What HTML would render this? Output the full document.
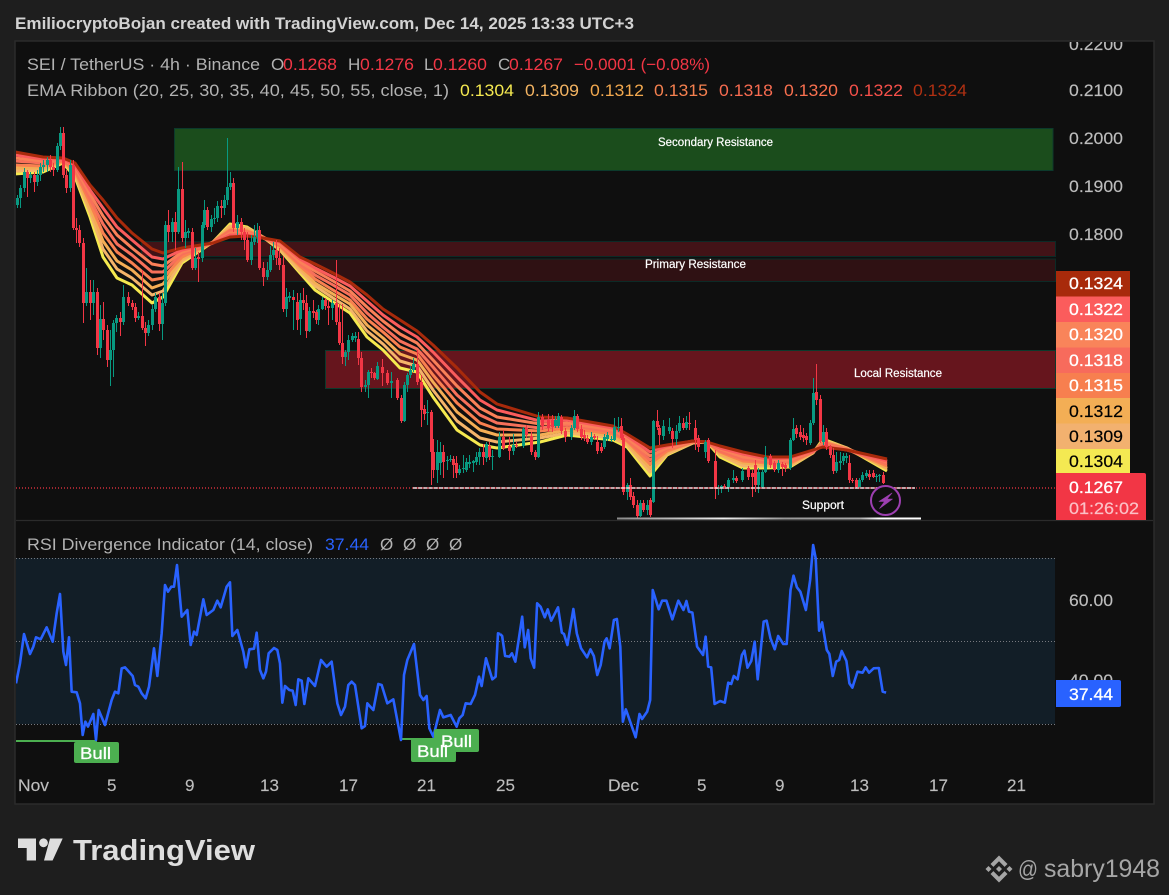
<!DOCTYPE html>
<html lang="en">
<head>
<meta charset="utf-8">
<title>SEI / TetherUS</title>
<style>
html,body{margin:0;padding:0;background:#1e1e1e;width:1169px;height:895px;overflow:hidden}
svg{display:block}
text{font-family:"Liberation Sans",sans-serif;font-size:17px;fill:#b2b2b2}
.ax{fill:#bdbdbd;stroke:#bdbdbd;stroke-width:.15}
.w{fill:#fff;stroke:#fff;stroke-width:.3}
.k{fill:#000;stroke:#000;stroke-width:.2}
.r{fill:#f23645}
.z{font-size:11.5px;fill:#fff;stroke:#fff;stroke-width:.2}
</style>
</head>
<body>
<svg xmlns="http://www.w3.org/2000/svg" width="1169" height="895" viewBox="0 0 1169 895">
<defs>
<clipPath id="f"><rect x="16" y="42" width="1137" height="762"/></clipPath>
<clipPath id="p"><rect x="16" y="42" width="1040" height="477"/></clipPath>
<linearGradient id="sg" x1="0" x2="1" y1="0" y2="0"><stop offset="0" stop-color="#8a8a8a"/><stop offset=".35" stop-color="#eee"/><stop offset=".55" stop-color="#999"/><stop offset=".8" stop-color="#aaa"/><stop offset=".86" stop-color="#fff"/><stop offset="1" stop-color="#fff"/></linearGradient>
</defs>
<rect width="1169" height="895" fill="#1e1e1e"/>
<text x="15" y="29" textLength="619" lengthAdjust="spacingAndGlyphs" style="fill:#d2d2d2;font-weight:bold">EmiliocryptoBojan created with TradingView.com, Dec 14, 2025 13:33 UTC+3</text>
<rect x="15" y="41" width="1139" height="763" fill="#0f0f0f" stroke="#2b2b2b" stroke-width="1.5"/>
<g clip-path="url(#f)">
<rect x="174.5" y="128.5" width="878.5" height="42" fill="#1b4d1c" stroke="#0c3a2c"/>
<rect x="141.5" y="241.5" width="914" height="15" fill="#421317" stroke="#0c2a26"/>
<rect x="174.5" y="259" width="881" height="22.5" fill="#2f1113" stroke="#0c2a26"/>
<rect x="325.5" y="350.5" width="730" height="38" fill="#66151d" stroke="#0c3a2c"/>

<g clip-path="url(#p)" fill="none" stroke-width="3" stroke-linejoin="round">
<polyline stroke="#f5e94f" points="15,174 43,172 63,163 75,177 90,217 103,257 117,278 132,285 152,303 163,297 182,263 213,242 230,224 247,227 263,237 280,250 300,273 315,290 333,302 350,313 367,337 383,350 400,368 417,372 433,397 457,430 480,445 497,448 540,442 567,435 613,440 627,447 650,476 667,455 693,443 707,442 720,457 743,468 767,468 790,467 813,453 823,439 847,448 887,471"/>
<polyline stroke="#f4b46a" points="15,171 43,170 63,162 75,175 90,212 103,249 117,269 132,278 152,295 163,291 182,261 213,242 230,226 247,228 263,237 280,249 300,271 315,286 333,298 350,309 367,331 383,344 400,361 417,366 433,390 457,421 480,438 497,442 540,438 567,433 613,438 627,445 650,472 667,454 693,443 707,442 720,455 743,466 767,466 790,466 813,453 823,440 847,448 887,469"/>
<polyline stroke="#f4ad55" points="15,168 43,168 63,162 75,173 90,208 103,241 117,261 132,270 152,288 163,284 182,259 213,242 230,228 247,230 263,237 280,247 300,268 315,283 333,294 350,304 367,325 383,338 400,354 417,360 433,382 457,412 480,430 497,435 540,435 567,430 613,436 627,443 650,468 667,452 693,442 707,442 720,454 743,463 767,465 790,464 813,452 823,441 847,449 887,468"/>
<polyline stroke="#f98050" points="15,165 43,166 63,161 75,171 90,203 103,233 117,252 132,263 152,280 163,278 182,257 213,242 230,230 247,231 263,237 280,246 300,266 315,279 333,290 350,300 367,319 383,332 400,347 417,354 433,375 457,403 480,423 497,429 540,431 567,428 613,434 627,441 650,464 667,451 693,442 707,442 720,452 743,461 767,463 790,463 813,452 823,442 847,449 887,466"/>
<polyline stroke="#f8705a" points="15,161 43,163 63,160 75,169 90,199 103,224 117,244 132,255 152,272 163,272 182,254 213,243 230,231 247,232 263,238 280,245 300,264 315,275 333,285 350,295 367,313 383,327 400,341 417,349 433,367 457,395 480,415 497,423 540,428 567,425 613,432 627,440 650,460 667,449 693,442 707,442 720,451 743,459 767,462 790,461 813,452 823,444 847,449 887,464"/>
<polyline stroke="#fa8058" points="15,158 43,161 63,159 75,167 90,194 103,216 117,235 132,248 152,264 163,266 182,252 213,243 230,233 247,233 263,238 280,244 300,262 315,271 333,281 350,291 367,307 383,321 400,334 417,343 433,360 457,386 480,408 497,417 540,424 567,423 613,430 627,438 650,456 667,448 693,442 707,442 720,449 743,457 767,460 790,460 813,451 823,445 847,449 887,462"/>
<polyline stroke="#fb5c5c" points="15,155 43,159 63,159 75,165 90,190 103,208 117,227 132,240 152,257 163,259 182,250 213,243 230,235 247,235 263,238 280,242 300,259 315,268 333,277 350,286 367,301 383,315 400,327 417,337 433,352 457,377 480,400 497,410 540,421 567,420 613,428 627,436 650,452 667,446 693,441 707,442 720,448 743,454 767,459 790,458 813,451 823,446 847,450 887,461"/>
<polyline stroke="#a82a0b" points="15,152 43,157 63,158 75,163 90,185 103,200 117,218 132,233 152,249 163,253 182,248 213,243 230,237 247,236 263,238 280,241 300,257 315,264 333,273 350,282 367,295 383,309 400,320 417,331 433,345 457,368 480,392 497,404 540,417 567,418 613,426 627,434 650,448 667,445 693,441 707,442 720,446 743,452 767,457 790,457 813,450 823,447 847,450 887,459"/>
</g>

<g clip-path="url(#p)"><g transform="translate(.5 0)" fill="none" shape-rendering="crispEdges">
<path stroke="#089981" stroke-width="1" d="M17 195V208M20 185V208M24 168V192M30 172V183M37 170V186M40 163V181M43 160V172M47 157V172M57 143V172M60 127V150M70 160V192M86 268V306M93 280V315M100 305V358M110 330V386M113 320V377M116 315V332M123 285V325M138 312V320M148 320V336M152 305V330M155 293V312M162 293V340M165 221V306M172 218V242M178 167V234M185 220V248M188 228V238M195 248V270M202 222V262M204 200V228M211 215V232M214 208V224M217 201V222M224 195V215M227 138V205M230 172V190M237 215V235M251 235V265M254 225V245M257 223V243M267 262V280M270 246V272M273 242V260M286 288V317M289 292V302M293 290V330M300 293V335M309 307V332M318 305V325M322 297V310M332 300V320M345 350V366M348 335V360M352 333V342M355 332V342M365 380V392M368 370V398M377 362V380M391 372V398M404 382V422M407 373V392M410 366V378M413 358V372M427 400V425M437 440V483M440 442V475M447 456V470M450 455V462M459 465V475M463 455V473M466 458V472M469 455V468M473 460V472M476 452V465M479 448V465M486 442V462M492 450V470M499 432V458M513 434V455M523 427V448M538 412V458M555 416V428M558 413V428M571 425V440M574 410V430M591 432V445M604 434V449M607 432V441M611 436V442M614 418V441M618 417V432M627 483V500M640 500V517M647 500V515M653 420V503M663 420V440M669 418V434M676 425V445M679 416V433M686 416V430M705 440V458M718 485V495M721 485V493M728 478V492M733 470V483M742 468V482M758 468V493M762 470V488M765 446V473M778 460V473M790 438V470M793 418V441M810 420V445M813 378V425M823 425V445M836 452V473M840 452V470M843 453V465M846 453V463M859 478V488M862 472V482M866 470V478M876 474V482M879 474V482"/>
<path stroke="#f23645" stroke-width="1" d="M27 170V197M34 172V192M50 155V172M53 163V176M63 127V178M66 170V193M73 160V230M76 218V243M79 225V247M83 238V323M90 280V320M97 288V355M103 302V340M107 325V367M120 312V336M128 292V306M132 300V310M135 303V322M142 270V330M145 322V346M159 293V331M168 210V242M175 212V250M182 162V242M192 228V270M198 252V282M207 207V230M221 200V218M233 178V232M241 218V240M244 228V250M247 232V262M259 226V270M263 262V286M276 240V265M279 248V270M283 256V312M297 293V330M303 288V310M306 295V338M313 300V318M316 310V324M325 298V310M328 300V325M336 260V325M339 304V345M342 304V364M358 332V365M361 352V392M371 368V378M374 372V380M382 359V386M387 370V385M397 378V400M401 395V423M417 350V385M421 375V427M424 405V420M431 410V485M433 439V478M443 445V478M453 456V478M456 456V478M483 444V465M489 442V460M503 430V450M509 437V460M516 442V448M526 425V438M531 432V455M535 450V460M542 414V430M548 414V432M552 415V432M561 415V434M565 428V442M577 414V432M581 425V440M584 430V441M587 435V444M594 434V440M597 436V454M601 443V453M621 418V440M623 435V495M630 478V500M633 492V508M637 500V518M643 500V512M650 498V517M657 410V430M659 425V445M672 428V448M683 418V430M689 412V430M695 420V450M698 435V452M708 438V463M715 450V499M724 484V489M736 476V483M748 466V480M752 470V497M755 460V492M770 454V468M774 461V472M782 462V476M785 463V472M796 425V438M800 425V440M803 428V442M806 433V445M816 364V405M820 395V443M826 428V450M830 445V458M833 448V474M849 455V483M852 478V483M856 478V488M869 470V480M873 470V478M883 472V484"/>
<path stroke="#089981" stroke-width="3" d="M17 198V205M20 188V198M24 172V188M30 175V178M37 175V182M40 167V175M43 165V167M47 160V165M57 146V170M60 133V146M70 165V188M86 292V303M93 292V303M100 319V348M110 350V360M113 323V350M116 318V323M123 297V322M138 316V318M148 325V333M152 309V325M155 297V309M162 303V324M165 225V303M172 222V232M178 189V232M185 232V238M188 231V233M195 258V268M202 225V258M204 210V225M211 219V227M214 218V219M217 206V218M224 200V208M227 187V200M230 183V187M237 222V228M251 242V260M254 237V242M257 230V237M267 270V277M270 255V270M273 250V255M286 297V309M289 296V298M300 300V319M309 311V331M318 309V320M322 300V309M332 303V308M345 352V357M348 340V352M352 336V340M355 336V338M365 385V387M368 372V385M377 366V379M391 381V383M404 385V421M407 375V385M410 370V375M413 364V370M427 412V413M437 452V470M440 452V463M447 460V461M450 459V460M459 469V473M463 468V469M466 462V470M469 462V464M473 461V463M476 457V462M479 452V457M486 444V458M492 456V457M499 437V457M513 445V451M523 429V446M538 417V457M555 420V426M558 416V426M571 428V437M574 416V428M591 437V442M604 437V447M607 435V439M611 439V440M614 427V440M618 427V428M627 485V492M640 503V516M647 505V510M653 421V502M663 426V436M669 427V431M676 431V439M679 423V431M686 422V428M705 442V452M718 488V489M721 486V488M728 480V488M733 478V480M742 471V480M758 472V485M762 472V487M765 457V472M778 463V470M790 440V468M793 429V440M810 423V443M813 393V423M823 432V442M836 462V471M840 461V463M843 456V461M846 456V458M859 480V487M862 475V480M866 473V476M876 476V477M879 475V476"/>
<path stroke="#f23645" stroke-width="3" d="M27 172V178M34 175V182M50 160V167M53 167V170M63 133V175M66 175V188M73 165V228M76 228V230M79 230V243M83 243V303M90 292V303M97 292V348M103 319V330M107 330V360M120 318V322M128 297V303M132 303V307M135 307V318M142 316V328M145 328V333M159 297V324M168 225V232M175 222V232M182 189V238M192 232V268M198 257V259M207 210V227M221 206V208M233 183V228M241 222V232M244 232V240M247 240V260M259 230V268M263 268V277M276 250V258M279 258V265M283 265V309M293 297V300M297 302V320M303 300V303M306 303V331M313 311V313M316 312V320M325 300V306M328 306V308M336 303V322M339 322V343M342 343V357M358 339V358M361 358V387M371 372V373M374 373V378M382 367V373M387 373V383M397 380V398M401 398V421M417 364V382M421 382V410M424 409V414M431 412V452M433 452V470M443 452V462M453 459V465M456 463V473M483 452V457M489 446V457M503 437V448M509 446V451M516 445V446M526 428V435M531 436V452M535 452V457M542 417V426M548 420V428M552 420V427M561 417V431M565 431V437M577 416V429M581 429V437M584 435V438M587 438V442M594 436V438M597 442V451M601 447V451M621 426V438M623 438V492M630 485V497M633 496V505M637 505V516M643 503V510M650 500V515M657 421V427M659 428V435M672 431V439M683 423V428M689 423V424M695 428V440M698 438V447M708 440V461M715 461V489M724 486V487M736 478V481M748 468V477M752 473V477M755 465V485M770 456V465M774 463V470M782 464V467M785 465V468M796 428V434M800 432V437M803 435V438M806 436V440M816 392V400M820 399V441M826 432V447M830 447V455M833 455V471M849 463V480M852 480V481M856 480V487M869 474V477M873 473V477M883 475V483"/>
</g></g>

<line x1="16" y1="488" x2="1056" y2="488" stroke="#f23645" stroke-width="1.2" stroke-dasharray="1 2"/>
<line x1="413" y1="488" x2="915" y2="488" stroke="#f23645" stroke-width="1.2"/>
<line x1="413" y1="488" x2="915" y2="488" stroke="#fff" stroke-width="1.2" stroke-dasharray="4 1.2"/>
<rect x="617" y="517.5" width="304" height="2" fill="url(#sg)"/>
<line x1="16" y1="520.5" x2="1153" y2="520.5" stroke="#2b2b2b" stroke-width="1.2"/>
<text class="z" x="658" y="146" textLength="115" lengthAdjust="spacingAndGlyphs">Secondary Resistance</text>
<text class="z" x="645" y="268" textLength="101" lengthAdjust="spacingAndGlyphs">Primary Resistance</text>
<text class="z" x="854" y="377" textLength="88" lengthAdjust="spacingAndGlyphs">Local Resistance</text>
<text class="z" x="802" y="509" textLength="42" lengthAdjust="spacingAndGlyphs">Support</text>
<circle cx="885.5" cy="500.5" r="14.5" fill="#0f0f0f" stroke="#9c3fb0" stroke-width="2"/>
<path d="M892 493L879 501.5H884.5L879.5 508.5L892.5 499H887Z" fill="#9c3fb0" stroke="#9c3fb0" stroke-width=".6" stroke-linejoin="round"/>

<text x="27" y="70" textLength="233" lengthAdjust="spacingAndGlyphs">SEI / TetherUS · 4h · Binance</text>
<text x="271" y="70">O</text><text class="r" x="283" y="70" textLength="54" lengthAdjust="spacingAndGlyphs">0.1268</text>
<text x="348" y="70">H</text><text class="r" x="360" y="70" textLength="54" lengthAdjust="spacingAndGlyphs">0.1276</text>
<text x="424" y="70">L</text><text class="r" x="433" y="70" textLength="54" lengthAdjust="spacingAndGlyphs">0.1260</text>
<text x="498" y="70">C</text><text class="r" x="509" y="70" textLength="54" lengthAdjust="spacingAndGlyphs">0.1267</text>
<text class="r" x="574" y="70" textLength="136" lengthAdjust="spacingAndGlyphs">−0.0001 (−0.08%)</text>
<text x="27" y="96" textLength="422" lengthAdjust="spacingAndGlyphs">EMA Ribbon (20, 25, 30, 35, 40, 45, 50, 55, close, 1)</text>
<text x="460" y="96" textLength="54" lengthAdjust="spacingAndGlyphs" style="fill:#f5e950">0.1304</text>
<text x="525" y="96" textLength="54" lengthAdjust="spacingAndGlyphs" style="fill:#f4b462">0.1309</text>
<text x="590" y="96" textLength="54" lengthAdjust="spacingAndGlyphs" style="fill:#f2a84e">0.1312</text>
<text x="654" y="96" textLength="54" lengthAdjust="spacingAndGlyphs" style="fill:#f5804f">0.1315</text>
<text x="719" y="96" textLength="54" lengthAdjust="spacingAndGlyphs" style="fill:#f76b50">0.1318</text>
<text x="784" y="96" textLength="54" lengthAdjust="spacingAndGlyphs" style="fill:#f9704f">0.1320</text>
<text x="849" y="96" textLength="54" lengthAdjust="spacingAndGlyphs" style="fill:#f6504a">0.1322</text>
<text x="913" y="96" textLength="54" lengthAdjust="spacingAndGlyphs" style="fill:#b03012">0.1324</text>

<text class="ax" x="1069" y="50" textLength="54" lengthAdjust="spacingAndGlyphs">0.2200</text>
<text class="ax" x="1069" y="96" textLength="54" lengthAdjust="spacingAndGlyphs">0.2100</text>
<text class="ax" x="1069" y="144" textLength="54" lengthAdjust="spacingAndGlyphs">0.2000</text>
<text class="ax" x="1069" y="192" textLength="54" lengthAdjust="spacingAndGlyphs">0.1900</text>
<text class="ax" x="1069" y="240" textLength="54" lengthAdjust="spacingAndGlyphs">0.1800</text>

<rect x="1056" y="271" width="74" height="26" fill="#a82a0b"/>
<rect x="1056" y="296.5" width="74" height="25.5" fill="#fb5c5c"/>
<rect x="1056" y="322" width="74" height="25.5" fill="#f9845a"/>
<rect x="1056" y="347.5" width="74" height="25.5" fill="#f76b5c"/>
<rect x="1056" y="373" width="74" height="25" fill="#f77f4f"/>
<rect x="1056" y="398" width="74" height="25.5" fill="#f3ae55"/>
<rect x="1056" y="423.5" width="74" height="25.5" fill="#f2b16f"/>
<rect x="1056" y="449" width="74" height="24" fill="#f4e952"/>
<path d="M1056 473H1144a2 2 0 0 1 2 2V520H1056Z" fill="#f23645"/>
<text class="w" x="1069" y="289" textLength="54" lengthAdjust="spacingAndGlyphs">0.1324</text>
<text class="w" x="1069" y="315" textLength="54" lengthAdjust="spacingAndGlyphs">0.1322</text>
<text class="w" x="1069" y="340" textLength="54" lengthAdjust="spacingAndGlyphs">0.1320</text>
<text class="w" x="1069" y="366" textLength="54" lengthAdjust="spacingAndGlyphs">0.1318</text>
<text class="w" x="1069" y="391" textLength="54" lengthAdjust="spacingAndGlyphs">0.1315</text>
<text class="k" x="1069" y="417" textLength="54" lengthAdjust="spacingAndGlyphs">0.1312</text>
<text class="k" x="1069" y="442" textLength="54" lengthAdjust="spacingAndGlyphs">0.1309</text>
<text class="k" x="1069" y="467" textLength="54" lengthAdjust="spacingAndGlyphs">0.1304</text>
<text class="w" x="1069" y="493" textLength="54" lengthAdjust="spacingAndGlyphs">0.1267</text>
<text x="1069" y="514" textLength="70" lengthAdjust="spacingAndGlyphs" style="fill:#fbc0c6;stroke:#fbc0c6;stroke-width:.2">01:26:02</text>

<text x="27" y="550" textLength="286" lengthAdjust="spacingAndGlyphs">RSI Divergence Indicator (14, close)</text>
<text x="325" y="550" textLength="44" lengthAdjust="spacingAndGlyphs" style="fill:#2962ff">37.44</text>
<text x="380" y="550">Ø</text><text x="403" y="550">Ø</text><text x="426" y="550">Ø</text><text x="449" y="550">Ø</text>

<rect x="16" y="558" width="1039" height="166" fill="#121e27"/>
<g stroke="#77797f" stroke-width="1" stroke-dasharray="1 2">
<line x1="16" y1="558.5" x2="1055" y2="558.5"/>
<line x1="16" y1="641.5" x2="1055" y2="641.5"/>
<line x1="16" y1="724.5" x2="1055" y2="724.5"/>
</g>
<path d="M15 741H97M400 739H434" stroke="#4caf50" stroke-width="2" fill="none"/>
<g fill="none" stroke="#2962ff" stroke-width="2.6" stroke-linejoin="round">
<polyline vector-effect="non-scaling-stroke" transform="translate(0 530) scale(.33333)" points="48,460 60,400 72,312 90,372 100,350 108,322 122,328 140,292 158,335 170,250 180,192 190,365 198,405 207,322 215,485 230,487 240,520 248,615 256,575 264,590 280,552 288,630 296,540 315,585 335,510 345,485 355,490 365,415 375,412 398,438 405,465 415,470 425,490 437,505 447,470 462,355 472,438 485,310 495,165 504,185 514,170 522,170 531,105 545,260 562,240 572,345 582,305 590,315 610,208 620,255 640,240 652,212 662,232 680,170 690,157 697,318 712,300 730,365 738,412 748,358 762,356 770,308 780,420 790,445 798,425 806,370 822,354 832,360 840,400 847,518 855,468 868,480 878,482 887,525 895,448 905,452 913,522 925,445 945,468 963,390 980,410 995,395 1012,520 1023,555 1035,530 1045,465 1055,455 1065,465 1085,595 1095,588 1102,520 1120,540 1135,462 1145,465 1162,520 1180,508 1203,630 1212,435 1222,390 1242,342 1260,495 1270,510 1280,498 1288,595 1300,620 1320,540 1330,562 1352,555 1370,590 1378,565 1388,555 1397,520 1412,522 1425,495 1437,440 1445,468 1458,385 1477,448 1487,440 1494,310 1500,312"/>
<polyline vector-effect="non-scaling-stroke" transform="translate(500 530) scale(.42662 .33333)" points="0,312 5,318 12,378 22,380 28,370 36,395 52,260 58,352 66,300 72,385 80,413 87,220 95,230 105,262 112,238 120,272 136,232 145,308 150,312 158,345 172,237 180,310 190,355 204,382 212,358 220,378 228,435 236,405 245,335 250,325 257,355 267,270 274,267 282,350 288,575 295,538 318,622 327,552 333,567 345,545 352,510 358,180 372,238 380,212 390,212 404,268 418,212 430,240 437,213 443,245 451,248 462,350 476,375 482,320 488,410 495,412 503,522 516,513 527,518 535,458 542,462 548,438 557,448 567,375 573,362 580,413 589,393 597,335 604,448 618,275 625,272 634,325 644,358 652,318 664,342 672,342 681,180 688,137 696,172 704,185 717,240 727,150 734,45 740,85 748,302 755,277 766,360 772,372 780,438 788,395 795,390 801,363 812,393 819,460 826,473 838,425 850,428 857,412 865,428 876,415 888,414 897,485 905,488"/>
</g>
<rect x="74" y="742" width="45" height="21" rx="2" fill="#4caf50"/>
<rect x="411" y="738" width="45" height="24" rx="2" fill="#4caf50"/>
<rect x="434" y="729" width="45" height="23" rx="2" fill="#4caf50"/>
<text class="w" x="80" y="759" textLength="31" lengthAdjust="spacingAndGlyphs">Bull</text>
<text class="w" x="417" y="757" textLength="31" lengthAdjust="spacingAndGlyphs">Bull</text>
<text class="w" x="441" y="747" textLength="31" lengthAdjust="spacingAndGlyphs">Bull</text>

<text class="ax" x="1069" y="606" textLength="44" lengthAdjust="spacingAndGlyphs">60.00</text>
<text class="ax" x="1069" y="686" textLength="44" lengthAdjust="spacingAndGlyphs">40.00</text>
<path d="M1056 680H1119a2 2 0 0 1 2 2V705a2 2 0 0 1-2 2H1056Z" fill="#2962ff"/>
<text class="w" x="1069" y="700" textLength="44" lengthAdjust="spacingAndGlyphs">37.44</text>

<text class="ax" x="18" y="791" textLength="31" lengthAdjust="spacingAndGlyphs">Nov</text>
<text class="ax" x="107" y="791">5</text>
<text class="ax" x="185" y="791">9</text>
<text class="ax" x="260" y="791">13</text>
<text class="ax" x="339" y="791">17</text>
<text class="ax" x="417" y="791">21</text>
<text class="ax" x="496" y="791">25</text>
<text class="ax" x="608" y="791" textLength="31" lengthAdjust="spacingAndGlyphs">Dec</text>
<text class="ax" x="697" y="791">5</text>
<text class="ax" x="775" y="791">9</text>
<text class="ax" x="850" y="791">13</text>
<text class="ax" x="929" y="791">17</text>
<text class="ax" x="1007" y="791">21</text>
</g>

<path d="M18 838.5H36V860.5H26.7V848H18Z" fill="#dedede"/>
<circle cx="43.5" cy="842.8" r="4.4" fill="#dedede"/>
<path d="M50 838.5H62.7L52.6 860.5H44Z" fill="#dedede"/>
<text x="73" y="860" textLength="182" lengthAdjust="spacingAndGlyphs" style="font-size:29px;font-weight:bold;fill:#dedede">TradingView</text>

<g fill="#a6a6a6">
<path d="M999 855.5L1007.5 864L1004.6 866.9L999 861.3L993.4 866.9L990.5 864Z"/>
<path d="M999 882.5L1007.5 874L1004.6 871.1L999 876.7L993.4 871.1L990.5 874Z"/>
<path d="M999 866L1002 869L999 872L996 869Z"/>
<path d="M988.5 866L991.5 869L988.5 872L985.5 869Z"/>
<path d="M1009.5 866L1012.5 869L1009.5 872L1006.5 869Z"/>
</g>
<text x="1018" y="877" textLength="20" lengthAdjust="spacingAndGlyphs" style="font-size:23px;fill:#a6a6a6">@</text>
<text x="1044" y="877" textLength="116" lengthAdjust="spacingAndGlyphs" style="font-size:25px;fill:#a6a6a6">sabry1948</text>
</svg>
</body>
</html>
